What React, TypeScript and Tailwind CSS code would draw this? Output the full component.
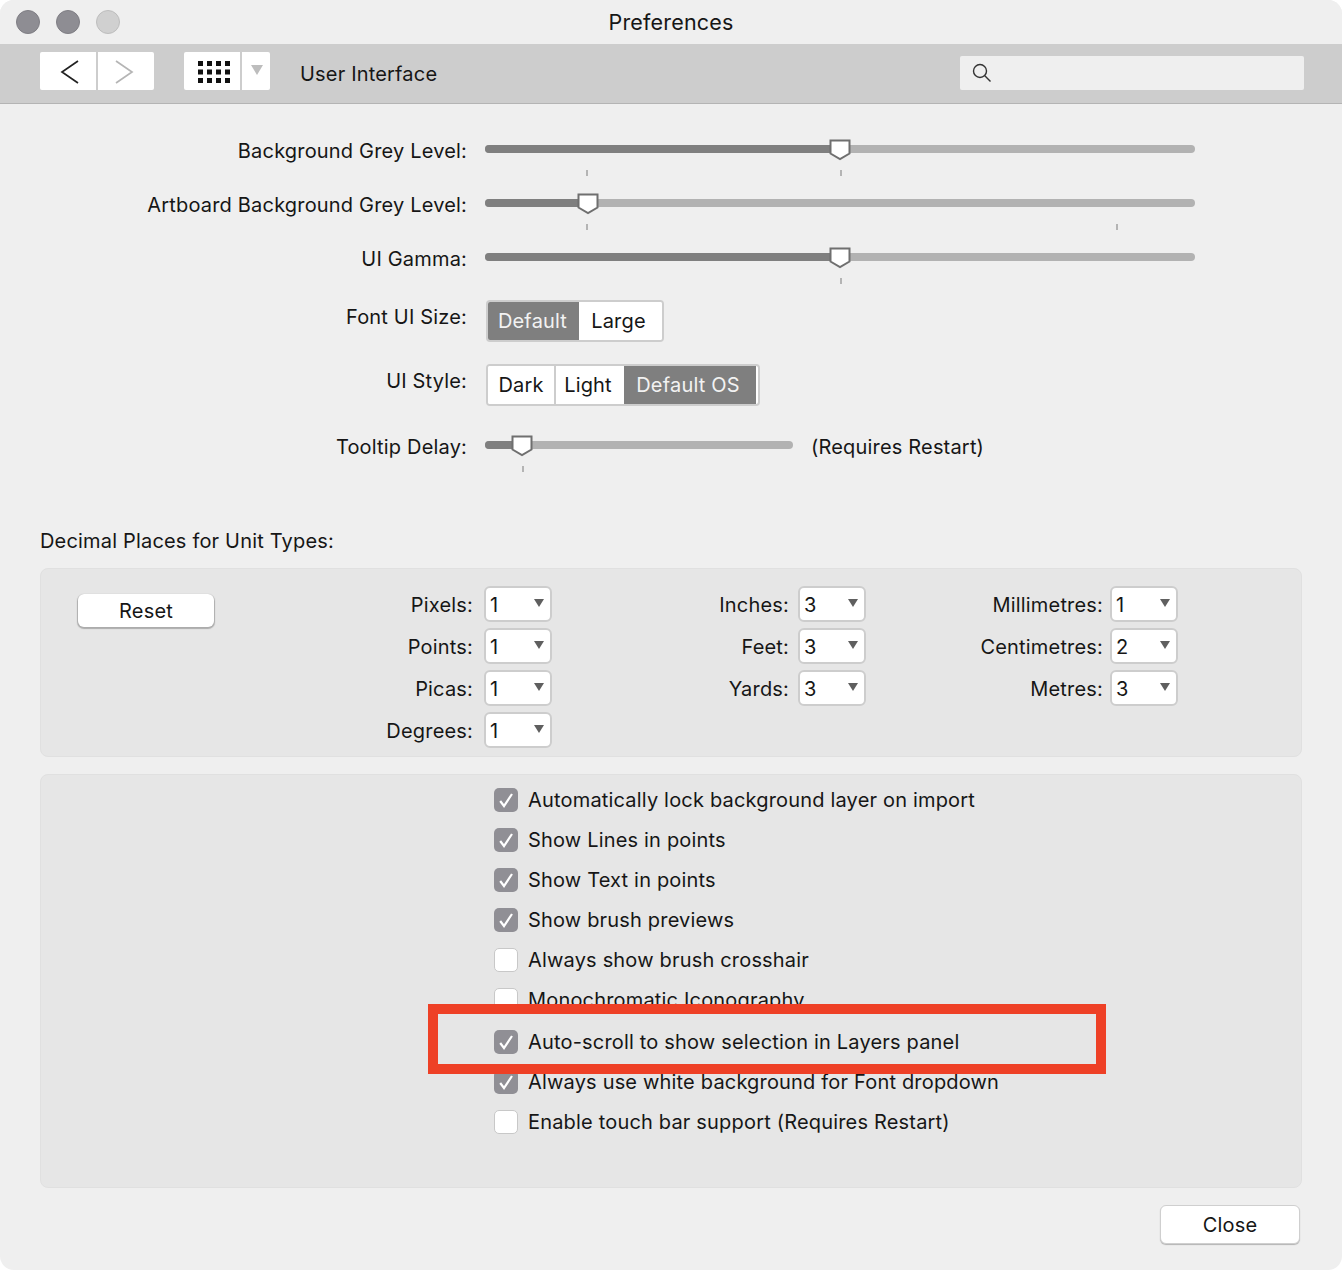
import React from "react";

const font = { fontFamily: "Inter, 'Liberation Sans', sans-serif" };

function Thumb() {
  return (
    <svg width="22" height="22" viewBox="0 0 22 22" className="absolute -top-[6px] -ml-[11px]">
      <path d="M1.5 1.5H20.5V14.5L11 20L1.5 14.5Z" fill="#fff" stroke="#6f6f6f" strokeWidth="2" />
    </svg>
  );
}

function Slider({ width, fill, ticks }: { width: number; fill: number; ticks: number[] }) {
  return (
    <div className="relative h-[8px] rounded-full bg-[#b2b2b2]" style={{ width }}>
      <div className="h-full rounded-l-full bg-[#7f7f7f]" style={{ width: fill }} />
      <div className="absolute top-0" style={{ left: fill }}>
        <Thumb />
      </div>
      {ticks.map((t) => (
        <div key={t} className="absolute top-[25px] h-[6px] w-[2px] bg-[#b4b4b4]" style={{ left: t }} />
      ))}
    </div>
  );
}

function SliderRow({ label, fill, ticks }: { label: string; fill: number; ticks: number[] }) {
  return (
    <div className="flex h-[54px] items-center">
      <div className="w-[467px] pt-[4px] text-right">{label}</div>
      <div className="ml-[18px]">
        <Slider width={710} fill={fill} ticks={ticks} />
      </div>
    </div>
  );
}

function Seg({ children, active, className }: { children: React.ReactNode; active?: boolean; className: string }) {
  return (
    <div className={`flex items-center justify-center ${active ? "bg-[#7f7f7f] text-[#f2f2f2]" : "bg-white"} ${className}`}>
      {children}
    </div>
  );
}

function Drop({ label, value, gap }: { label: string; value: string; gap: string }) {
  return (
    <div className={`flex h-[36px] items-center justify-end ${gap}`}>
      <span className="pt-[2px]">{label}</span>
      <div className="flex h-[36px] w-[68px] items-center justify-between rounded-[6px] border-2 border-[#cdcdcd] bg-white pl-[4px] pr-[5px]">
        <span className="pt-[2px]">{value}</span>
        <svg width="12" height="10" viewBox="0 0 12 10" className="-mt-[3px]">
          <path d="M1 1H11L6 9Z" fill="#5f5f5f" />
        </svg>
      </div>
    </div>
  );
}

function Check({ label, checked }: { label: string; checked?: boolean }) {
  return (
    <div className="flex h-[40px] items-center">
      {checked ? (
        <div className="h-[24px] w-[24px] rounded-[5px] bg-[#908f95]">
          <svg width="24" height="24" viewBox="0 0 24 24" fill="none">
            <path d="M6.2 13L10 18L18 6" stroke="#fff" strokeWidth="2.2" />
          </svg>
        </div>
      ) : (
        <div className="h-[24px] w-[24px] rounded-[5px] border-[1.5px] border-[#c8c8c8] bg-white" />
      )}
      <span className="ml-[10px]">{label}</span>
    </div>
  );
}

export default function App() {
  return (
    <div
      className="relative h-[1270px] w-[1342px] overflow-hidden rounded-[14px] bg-[#efefef] text-[20px] leading-[24px] tracking-[0.18px] text-[#161616]"
      style={font}
    >
      <div className="flex h-[44px] items-center justify-center bg-[#efefef]">
        <span className="text-[21.5px]">Preferences</span>
        <div className="absolute left-[16px] top-[10px] flex gap-[16px]">
          <div className="h-[24px] w-[24px] rounded-full border border-[#7f7e84] bg-[#8e8d93]" />
          <div className="h-[24px] w-[24px] rounded-full border border-[#7f7e84] bg-[#8e8d93]" />
          <div className="h-[24px] w-[24px] rounded-full border border-[#bdbdbd] bg-[#d0d0d0]" />
        </div>
      </div>

      <div className="flex h-[60px] items-center border-b border-[#b4b4b4] bg-[#cdcdcd] pb-[5px] pl-[40px] pr-[38px]">
        <div className="flex h-[38px] gap-[2px]">
          <div className="flex w-[56px] items-center justify-center rounded-l-[2px] bg-white pl-[4px]">
            <svg width="20" height="26" viewBox="0 0 20 26" fill="none" className="mt-[2px]">
              <path d="M18 2L2 13L18 24" stroke="#222" strokeWidth="1.7" />
            </svg>
          </div>
          <div className="flex w-[56px] items-center justify-center rounded-r-[2px] bg-white pr-[5px]">
            <svg width="20" height="26" viewBox="0 0 20 26" fill="none" className="mt-[2px]">
              <path d="M2 2L18 13L2 24" stroke="#b5b5b5" strokeWidth="1.7" />
            </svg>
          </div>
        </div>
        <div className="ml-[30px] flex h-[38px] gap-[2px]">
          <div className="flex w-[56px] items-center justify-center rounded-l-[2px] bg-white pl-[4px]">
            <svg width="32" height="22" viewBox="0 0 32 22" fill="#111" className="mt-[2px]">
              {[0, 8.5, 17].map((y) =>
                [0, 9, 18, 27].map((x) => <rect key={`${x}-${y}`} x={x} y={y} width="5" height="5" />)
              )}
            </svg>
          </div>
          <div className="flex w-[28px] items-center justify-center rounded-r-[2px] bg-white pl-[2px]">
            <svg width="14" height="12" viewBox="0 0 14 12" className="-mt-[2px]">
              <path d="M1 1H13L7 11Z" fill="#bdbdbd" />
            </svg>
          </div>
        </div>
        <div className="ml-[30px] pt-[6px]">User Interface</div>
        <div className="ml-auto mt-[4px] flex h-[34px] w-[344px] items-center rounded-[2px] bg-[#efefef] pl-[12px]">
          <svg width="20" height="20" viewBox="0 0 20 20" fill="none" stroke="#333" strokeWidth="1.4">
            <circle cx="8" cy="8" r="6.5" />
            <path d="M12.8 12.8L18.5 18.5" />
          </svg>
        </div>
      </div>

      <div className="pt-[18px]">
        <SliderRow label="Background Grey Level:" fill={355} ticks={[101, 355]} />
        <SliderRow label="Artboard Background Grey Level:" fill={103} ticks={[101, 631]} />
        <SliderRow label="UI Gamma:" fill={355} ticks={[355]} />

        <div className="mt-[16px] flex h-[42px]">
          <div className="w-[467px] pt-[5px] text-right">Font UI Size:</div>
          <div className="ml-[19px] flex h-[42px] w-[178px] overflow-hidden rounded-[4px] border-2 border-[#cdcdcd] bg-white">
            <Seg active className="w-[91px] pr-[2px]">Default</Seg>
            <Seg className="flex-1 pr-[4px]">Large</Seg>
          </div>
        </div>

        <div className="mt-[22px] flex h-[42px]">
          <div className="w-[467px] pt-[5px] text-right">UI Style:</div>
          <div className="ml-[19px] flex h-[42px] w-[274px] overflow-hidden rounded-[4px] border-2 border-[#cdcdcd] bg-white">
            <Seg className="w-[68px] border-r-2 border-[#cdcdcd]">Dark</Seg>
            <Seg className="w-[68px] pr-[4px]">Light</Seg>
            <Seg active className="w-[132px] pr-[4px]">Default OS</Seg>
          </div>
        </div>

        <div className="mt-[21px] flex h-[40px] items-start">
          <div className="w-[467px] pt-[8px] text-right">Tooltip Delay:</div>
          <div className="ml-[18px] mt-[14px]">
            <Slider width={308} fill={37} ticks={[37]} />
          </div>
          <div className="ml-[18px] pt-[8px]">(Requires Restart)</div>
        </div>

        <div className="ml-[40px] mt-[62px]">Decimal Places for Unit Types:</div>

        <div className="mx-[40px] mt-[15px] flex h-[189px] rounded-[8px] border border-[#e0e0e0] bg-[#e6e6e6] pl-[37px] pt-[17px]">
          <div className="mt-[8px] flex h-[33px] w-[136px] items-center justify-center rounded-[6px] bg-white shadow-[0_1px_1px_1px_rgba(0,0,0,0.25)]">
            Reset
          </div>
          <div className="flex w-[338px] flex-col gap-[6px]">
            <Drop label="Pixels:" value="1" gap="gap-[11px]" />
            <Drop label="Points:" value="1" gap="gap-[11px]" />
            <Drop label="Picas:" value="1" gap="gap-[11px]" />
            <Drop label="Degrees:" value="1" gap="gap-[11px]" />
          </div>
          <div className="flex w-[314px] flex-col gap-[6px]">
            <Drop label="Inches:" value="3" gap="gap-[9px]" />
            <Drop label="Feet:" value="3" gap="gap-[9px]" />
            <Drop label="Yards:" value="3" gap="gap-[9px]" />
          </div>
          <div className="flex w-[312px] flex-col gap-[6px]">
            <Drop label="Millimetres:" value="1" gap="gap-[7px]" />
            <Drop label="Centimetres:" value="2" gap="gap-[7px]" />
            <Drop label="Metres:" value="3" gap="gap-[7px]" />
          </div>
        </div>

        <div className="mx-[40px] mt-[17px] h-[414px] rounded-[8px] border border-[#e0e0e0] bg-[#e6e6e6] pl-[453px] pt-[5px]">
          <Check checked label="Automatically lock background layer on import" />
          <Check checked label="Show Lines in points" />
          <Check checked label="Show Text in points" />
          <Check checked label="Show brush previews" />
          <Check label="Always show brush crosshair" />
          <Check label="Monochromatic Iconography" />
          <div className="h-[42px]" />
          <Check checked label="Always use white background for Font dropdown" />
          <Check label="Enable touch bar support (Requires Restart)" />
        </div>

        <div className="mr-[42px] mt-[17px] flex justify-end">
          <div className="flex h-[39px] w-[140px] items-center justify-center rounded-[6px] border border-[#cfcfcf] bg-white shadow-[0_1px_1px_rgba(0,0,0,0.25)]">
            Close
          </div>
        </div>
      </div>

      <div className="absolute left-[428px] top-[1004px] h-[70px] w-[678px] border-[10px] border-[#ee4026] bg-[#e6e6e6] pl-[56px] pt-[8px]">
        <Check checked label="Auto-scroll to show selection in Layers panel" />
      </div>
    </div>
  );
}
